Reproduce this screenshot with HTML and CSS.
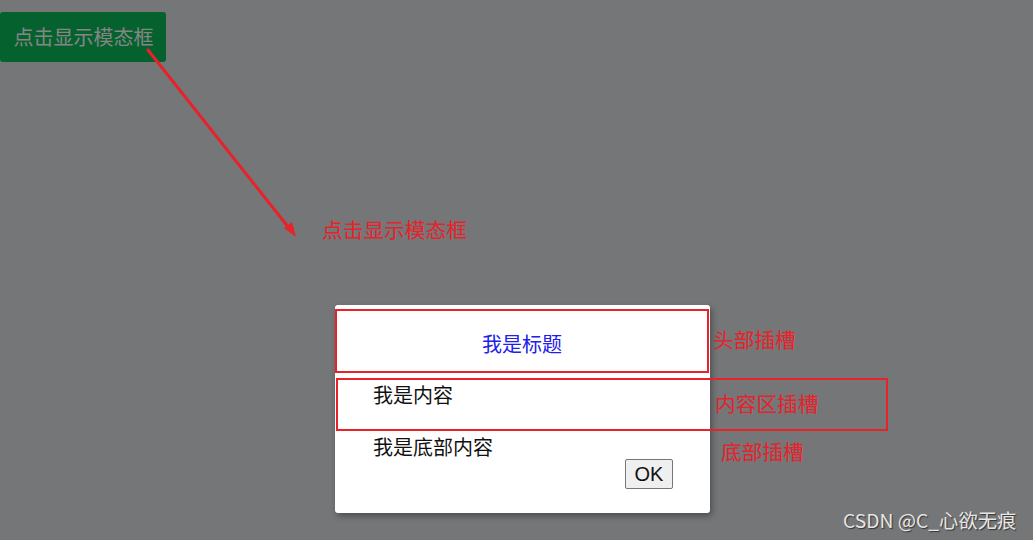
FILE: index.html
```html
<!DOCTYPE html>
<html lang="zh-CN">
<head>
<meta charset="utf-8">
<title>模态框</title>
<link rel="stylesheet" href="styles.css">
</head>
<body>
<div class="page">
  <button class="show-btn">点击显示模态框</button>

  <svg class="arrow" width="1033" height="540" viewBox="0 0 1033 540">
    <line x1="148" y1="50" x2="289" y2="228" stroke="#e8212b" stroke-width="3" stroke-linecap="round"/>
    <polygon points="296,237 284,228 292,222" fill="#e8212b"/>
  </svg>

  <div class="note note-show">点击显示模态框</div>

  <div class="modal">
    <div class="modal-header">我是标题</div>
    <div class="modal-body">我是内容</div>
    <div class="modal-footer">
      <div class="footer-text">我是底部内容</div>
      <div class="footer-actions"><button class="ok-btn">OK</button></div>
    </div>
  </div>

  <div class="note note-head">头部插槽</div>
  <div class="note note-body">内容区插槽</div>
  <div class="note note-foot">底部插槽</div>

  <div class="watermark">CSDN @C_心欲无痕</div>
</div>
</body>
</html>
```

FILE: styles.css
```css
html, body {
  margin: 0;
  padding: 0;
}
body {
  background: #757677;
  font-family: "Noto Sans CJK SC", "Liberation Sans", sans-serif;
  width: 1033px;
  height: 540px;
  overflow: hidden;
}
.page {
  position: relative;
  width: 1033px;
  height: 540px;
  padding-top: 12px;
  box-sizing: border-box;
}
.show-btn {
  display: block;
  width: 166px;
  height: 50px;
  margin: 0;
  padding: 0 0 0 1px;
  border: none;
  border-radius: 3px;
  background: #05622f;
  color: #858585;
  font-family: "Noto Sans CJK SC", sans-serif;
  font-size: 20px;
  line-height: 26px;
}
.arrow {
  position: absolute;
  left: 0;
  top: 0;
}
.note {
  position: absolute;
  color: #e8212b;
  font-size: 20.7px;
  line-height: 26px;
  white-space: nowrap;
}
.note-show { left: 322px; top: 216px; }
.note-head { left: 713px; top: 326px; }
.note-body { left: 715px; top: 390px; }
.note-foot { left: 721px; top: 438px; }

.modal {
  position: absolute;
  left: 335px;
  top: 305px;
  width: 375px;
  height: 208px;
  box-sizing: border-box;
  padding-top: 4px;
  background: #fff;
  border-radius: 3px;
  box-shadow: 2px 3px 6px rgba(0, 0, 0, 0.35);
}
.modal-header {
  box-sizing: border-box;
  width: 374px;
  height: 64px;
  border: 2px solid #e8212b;
  padding-top: 20px;
  text-align: center;
  color: #2020e8;
  font-size: 20px;
  line-height: 26px;
}
.modal-body {
  box-sizing: border-box;
  width: 552px;
  height: 53px;
  margin: 5px 0 0 1px;
  border: 2px solid #e8212b;
  padding: 2px 0 0 35px;
  color: #111;
  font-size: 20px;
  line-height: 26px;
}
.modal-footer {
  padding-left: 38px;
  padding-right: 37px;
  color: #111;
  font-size: 20px;
  line-height: 26px;
}
.footer-text {
  margin-top: 3px;
}
.footer-actions {
  display: flex;
  justify-content: flex-end;
  margin-top: -1px;
}
.ok-btn {
  width: 48px;
  height: 30px;
  padding: 0;
  margin: 0;
  font-family: "Liberation Sans", Arial, sans-serif;
  font-size: 20px;
  color: #111;
  background: #efefef;
  border: 1px solid #767676;
  border-radius: 2px;
}
.watermark {
  position: absolute;
  left: 843px;
  top: 507px;
  color: #e6e6e6;
  font-size: 19.3px;
  line-height: 26px;
  white-space: nowrap;
  text-shadow: 1px 1px 1px #333;
}
```
